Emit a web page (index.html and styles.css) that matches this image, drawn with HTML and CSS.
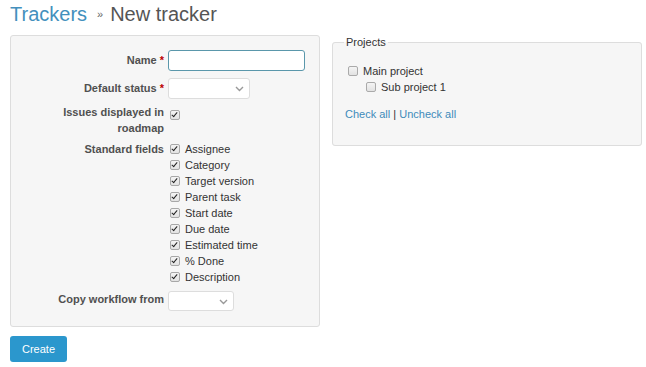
FILE: index.html
```html
<!DOCTYPE html>
<html>
<head>
<meta charset="utf-8">
<link rel="stylesheet" href="styles.css">
</head>
<body>
<h2 class="title"><a href="#" class="link">Trackers</a><span class="sep">&raquo;</span>New tracker</h2>
<div class="columns">
  <div class="left">
    <div class="box">
      <div class="row row-name">
        <label class="lbl">Name <span class="req">*</span></label>
        <input type="text" class="text-input">
      </div>
      <div class="row row-status">
        <label class="lbl">Default status <span class="req">*</span></label>
        <span class="select-wrap w82"><select class="sel"></select><svg class="chev" width="9" height="6" viewBox="0 0 9 6"><path d="M1 1 L4.5 4.5 L8 1" fill="none" stroke="#999" stroke-width="1.4"/></svg></span>
      </div>
      <div class="row row-roadmap">
        <label class="lbl">Issues displayed in roadmap</label>
        <div class="val"><input type="checkbox" class="cb cb-top" checked></div>
      </div>
      <div class="row row-fields">
        <label class="lbl">Standard fields</label>
        <div class="val list">
          <label class="item"><input type="checkbox" class="cb" checked>Assignee</label>
          <label class="item"><input type="checkbox" class="cb" checked>Category</label>
          <label class="item"><input type="checkbox" class="cb" checked>Target version</label>
          <label class="item"><input type="checkbox" class="cb" checked>Parent task</label>
          <label class="item"><input type="checkbox" class="cb" checked>Start date</label>
          <label class="item"><input type="checkbox" class="cb" checked>Due date</label>
          <label class="item"><input type="checkbox" class="cb" checked>Estimated time</label>
          <label class="item"><input type="checkbox" class="cb" checked>% Done</label>
          <label class="item"><input type="checkbox" class="cb" checked>Description</label>
        </div>
      </div>
      <div class="row row-copy">
        <label class="lbl">Copy workflow from</label>
        <span class="select-wrap w66"><select class="sel"></select><svg class="chev" width="9" height="6" viewBox="0 0 9 6"><path d="M1 1 L4.5 4.5 L8 1" fill="none" stroke="#999" stroke-width="1.4"/></svg></span>
      </div>
    </div>
    <button class="btn">Create</button>
  </div>
  <div class="right">
    <fieldset class="projects">
      <legend class="legend">Projects</legend>
      <div class="tree">
        <label class="item"><input type="checkbox" class="cb cb-grey">Main project</label>
        <label class="item sub"><input type="checkbox" class="cb cb-grey">Sub project 1</label>
      </div>
      <p class="checks"><a href="#" class="link">Check all</a> | <a href="#" class="link">Uncheck all</a></p>
    </fieldset>
  </div>
</div>
</body>
</html>
```

FILE: styles.css
```css
html, body {
  margin: 0;
  padding: 0;
  background: #fff;
}
body {
  padding: 0 0 0 10px;
  font-family: "Liberation Sans", Arial, sans-serif;
  font-size: 11px;
  color: #333;
}
.link {
  color: #3e8bba;
  text-decoration: none;
}
.title {
  margin: 0;
  height: 35px;
  line-height: 28px;
  font-size: 20px;
  font-weight: normal;
  color: #555;
  white-space: nowrap;
}
.title .link { color: #4390bd; }
.sep {
  display: inline-block;
  margin: 0 7px 0 10px;
  font-size: 11px;
  color: #666;
  vertical-align: 3px;
}
.columns {
  display: flex;
  gap: 12px;
  align-items: flex-start;
}
.left { width: 310px; flex: 0 0 310px; }
.right { width: 310px; flex: 0 0 310px; }
.box {
  box-sizing: border-box;
  height: 292px;
  background: #f6f6f6;
  border: 1px solid #ddd;
  border-radius: 3px;
  padding-top: 14px;
}
.row {
  display: flex;
  align-items: flex-start;
}
.lbl {
  box-sizing: border-box;
  width: 157px;
  flex: 0 0 157px;
  padding-right: 4px;
  text-align: right;
  font-weight: bold;
  color: #505050;
  line-height: 16px;
}
.req { color: #bb0000; }
.row-name .lbl, .row-status .lbl { padding-top: 1px; line-height: 19px; }
.row-name { height: 21px; }
.row-status { margin-top: 7px; height: 21px; }
.row-roadmap { margin-top: 5px; }
.row-roadmap .lbl { padding-left: 40px; }
.row-fields { margin-top: 5px; }
.row-copy { margin-top: 6px; }
.text-input {
  box-sizing: border-box;
  width: 137px;
  height: 21px;
  margin: 0;
  border: 1px solid #5a97ab;
  border-radius: 3px;
  background: #fff;
  outline: none;
}
.select-wrap {
  position: relative;
  display: inline-block;
  height: 21px;
}
.w82 { width: 82px; }
.w66 { width: 66px; height: 20px; }
.sel {
  -webkit-appearance: none;
  appearance: none;
  box-sizing: border-box;
  width: 100%;
  height: 100%;
  margin: 0;
  border: 1px solid #ddd;
  border-radius: 3px;
  background: #fff;
}
.chev {
  position: absolute;
  right: 6px;
  top: 8px;
}
.list { display: flex; flex-direction: column; }
.item {
  display: flex;
  align-items: center;
  height: 16px;
  line-height: 16px;
  color: #333;
  white-space: nowrap;
}
.cb {
  -webkit-appearance: none;
  appearance: none;
  position: relative;
  box-sizing: border-box;
  width: 10px;
  height: 10px;
  margin: 0 5px 0 2px;
  border: 1px solid #a8a8a8;
  border-radius: 2px;
  background: linear-gradient(#f4f4f4, #e2e2e2);
}
.cb:checked::after {
  content: "";
  position: absolute;
  left: 2px;
  top: 0px;
  width: 2px;
  height: 5px;
  border: solid #222;
  border-width: 0 1.6px 1.6px 0;
  transform: rotate(40deg);
}
.cb-top { margin-top: 6px; }
.cb-grey { border-color: #aaa; }
.projects {
  box-sizing: border-box;
  margin: 1px 0 0;
  height: 110px;
  padding: 14px 12px 0 12px;
  border: 1px solid #ddd;
  border-radius: 3px;
  background: #f6f6f6;
  min-width: 0;
}
.legend {
  padding: 0 2px;
  margin-left: -1px;
  color: #333;
  line-height: 13px;
}
.tree { display: flex; flex-direction: column; }
.tree .item .cb { margin: 0 5px 0 3px; }
.tree .sub { padding-left: 18px; }
.checks {
  margin: 11px 0 0;
  line-height: 16px;
  color: #333;
}
.btn {
  margin-top: 9px;
  height: 26px;
  padding: 0 12px;
  border: none;
  border-radius: 3px;
  background: #2b97cd;
  color: #fff;
  font-family: "Liberation Sans", Arial, sans-serif;
  font-size: 11px;
}
```
